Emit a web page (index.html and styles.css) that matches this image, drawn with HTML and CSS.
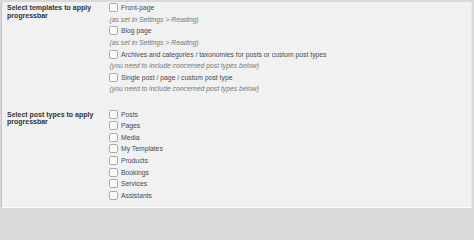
FILE: index.html
```html
<!DOCTYPE html>
<html>
<head>
<meta charset="utf-8">
<link rel="stylesheet" href="styles.css">
</head>
<body>
<div class="panel">
  <div class="section first">
    <div class="label">Select templates to apply progressbar</div>
    <div class="options">
      <div class="row"><span class="cb"></span>Front-page</div>
      <div class="row note">(as set in Settings &gt; Reading)</div>
      <div class="row"><span class="cb"></span>Blog page</div>
      <div class="row note">(as set in Settings &gt; Reading)</div>
      <div class="row"><span class="cb"></span>Archives and categories / taxonomies for posts or custom post types</div>
      <div class="row note">(you need to include concerned post types below)</div>
      <div class="row"><span class="cb"></span>Single post / page / custom post type</div>
      <div class="row note">(you need to include concerned post types below)</div>
    </div>
  </div>
  <div class="section second">
    <div class="label">Select post types to apply progressbar</div>
    <div class="options">
      <div class="row"><span class="cb"></span>Posts</div>
      <div class="row"><span class="cb"></span>Pages</div>
      <div class="row"><span class="cb"></span>Media</div>
      <div class="row"><span class="cb"></span>My Templates</div>
      <div class="row"><span class="cb"></span>Products</div>
      <div class="row"><span class="cb"></span>Bookings</div>
      <div class="row"><span class="cb"></span>Services</div>
      <div class="row"><span class="cb"></span>Assistants</div>
    </div>
  </div>
</div>
</body>
</html>
```
FILE: styles.css
```css
html {
  background: #d9d9d9;
}
html, body {
  margin: 0;
  padding: 0;
}
body {
  width: 474px;
  height: 211px;
  overflow: hidden;
  font-family: "Liberation Sans", Arial, sans-serif;
}
.panel {
  margin: 2px 2px 0 1px;
  height: 205px;
  background: #f1f1f1;
  border-left: 1px solid #c4c4c4;
  border-right: 1px solid #e8e8e8;
  border-bottom: 1px solid #ffffff;
  box-sizing: content-box;
}
.section {
  display: grid;
  grid-template-columns: 107px 1fr;
}
.section.second {
  margin-top: 14px;
}
.label {
  padding-left: 5px;
  padding-top: 2px;
  font-size: 7px;
  line-height: 7.8px;
  font-weight: bold;
  color: #333;
  width: 92px;
}
.options {
  display: flex;
  flex-direction: column;
}
.row {
  height: 11.57px;
  display: flex;
  align-items: center;
  font-size: 6.8px;
  color: #4a4a4a;
  white-space: nowrap;
}
.row.note {
  font-style: italic;
  color: #777;
  padding-left: 0.5px;
}
.cb {
  width: 7px;
  height: 7px;
  border: 0.8px solid #aaa;
  border-radius: 1.8px;
  background: #fafafa;
  margin-left: 0;
  margin-right: 3px;
  flex: none;
}
```
